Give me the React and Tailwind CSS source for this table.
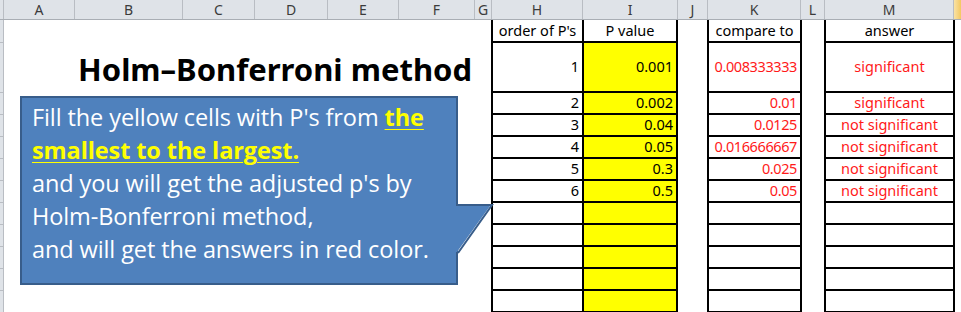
const cols = [
  { label: 'A', w: 'w-[71px]' },
  { label: 'B', w: 'w-[108px]' },
  { label: 'C', w: 'w-[72px]' },
  { label: 'D', w: 'w-[73px]' },
  { label: 'E', w: 'w-[71px]' },
  { label: 'F', w: 'w-[76px]' },
  { label: 'G', w: 'w-[17px]' },
  { label: 'H', w: 'w-[91px]' },
  { label: 'I', w: 'w-[95px]' },
  { label: 'J', w: 'w-[30px]' },
  { label: 'K', w: 'w-[93px]' },
  { label: 'L', w: 'w-[24px]' },
  { label: 'M', w: 'w-[129px]' },
]

const data = [
  { n: '1', p: '0.001', cmp: '0.008333333', ans: 'significant', h: 'h-[50px]' },
  { n: '2', p: '0.002', cmp: '0.01', ans: 'significant' },
  { n: '3', p: '0.04', cmp: '0.0125', ans: 'not significant' },
  { n: '4', p: '0.05', cmp: '0.016666667', ans: 'not significant' },
  { n: '5', p: '0.3', cmp: '0.025', ans: 'not significant' },
  { n: '6', p: '0.5', cmp: '0.05', ans: 'not significant' },
  {}, {}, {}, {}, {},
]

function Row({ h = 'h-[22px]', n, p, cmp, ans, head }) {
  const align = head ? 'justify-center' : 'justify-end pr-[3px]'
  return (
    <div className={`flex ${h}`}>
      <div className={`w-[93px] border-x-2 border-b-2 border-black flex items-center ${align}`}>{n}</div>
      <div className={`w-[94px] border-r-2 border-b-2 border-black flex items-center ${align} ${head ? '' : 'bg-[#ffff00]'}`}>{p}</div>
      <div className="w-[29px]" />
      <div className={`w-[95px] border-x-2 border-b-2 border-black flex items-center ${align} ${head ? '' : 'text-[#ff1a1a] tracking-[-0.4px]'}`}>{cmp}</div>
      <div className="w-[22px]" />
      <div className={`w-[131px] border-x-2 border-b-2 border-black flex items-center justify-center ${head ? '' : 'text-[#ff1a1a]'}`}>{ans}</div>
    </div>
  )
}

export default function App() {
  const heights = ['h-[23px]', 'h-[50px]', ...Array(10).fill('h-[22px]')]

  return (
    <div className="w-[961px] h-[312px] overflow-hidden bg-white font-['Noto_Sans',sans-serif] text-[14.5px] text-black">
      {/* column headers */}
      <div className="flex h-[20px] bg-[#dfe3e8] border-b border-[#a9aeb4] text-[14px] text-[#3b3b3b]">
        <div className="w-[4px] border-r border-[#b9bdc3]" />
        {cols.map(c => (
          <div key={c.label} className={`${c.w} border-r border-[#b9bdc3] flex items-center justify-center leading-none`}>
            {c.label}
          </div>
        ))}
        <div className="flex-1 bg-gradient-to-r from-[#f9e2a4] to-[#f3c85f]" />
      </div>

      <div className="flex">
        {/* row headers */}
        <div className="w-[4px] flex flex-col bg-[#dfe3e8] border-r border-[#b9bdc3]">
          {heights.map((h, i) => (
            <div key={i} className={`${h} border-b border-[#b9bdc3]`} />
          ))}
        </div>

        {/* free area with title and callout */}
        <div className="w-[487px]">
          <h1 className="pt-[33px] pr-[19px] text-right text-[31px] leading-[32px] font-bold">
            Holm–Bonferroni method
          </h1>
          <div className="relative ml-[16px] mt-[11px] w-[438px] h-[189px] bg-[#4f81bd] border-2 border-[#385d8a] pl-[10px] pt-[3px] text-white font-['Open_Sans',sans-serif] text-[23.5px] leading-[33px] tracking-[-0.1px]">
            <p>
              Fill the yellow cells with P's from{' '}
              <span className="font-bold text-[#ffff00] underline underline-offset-[3px] decoration-1">the</span>
              <br />
              <span className="font-bold text-[#ffff00] underline underline-offset-[3px] decoration-1">smallest to the largest.</span>
              <br />
              and you will get the adjusted p's by
              <br />
              Holm-Bonferroni method,
              <br />
              and will get the answers in red color.
            </p>
            <svg className="absolute left-[430px] top-[106px] overflow-visible" width="44" height="52" viewBox="0 0 44 52">
              <polygon points="2,2 38,2 5,48 2,48" fill="#4f81bd" />
              <polyline points="5,1 40,1 6,49" fill="none" stroke="#385d8a" strokeWidth="2" />
            </svg>
          </div>
        </div>

        {/* bordered table */}
        <div className="flex flex-col">
          <Row head h="h-[23px]" n="order of P's" p="P value" cmp="compare to" ans="answer" />
          {data.map((r, i) => (
            <Row key={i} {...r} />
          ))}
        </div>
      </div>
    </div>
  )
}
